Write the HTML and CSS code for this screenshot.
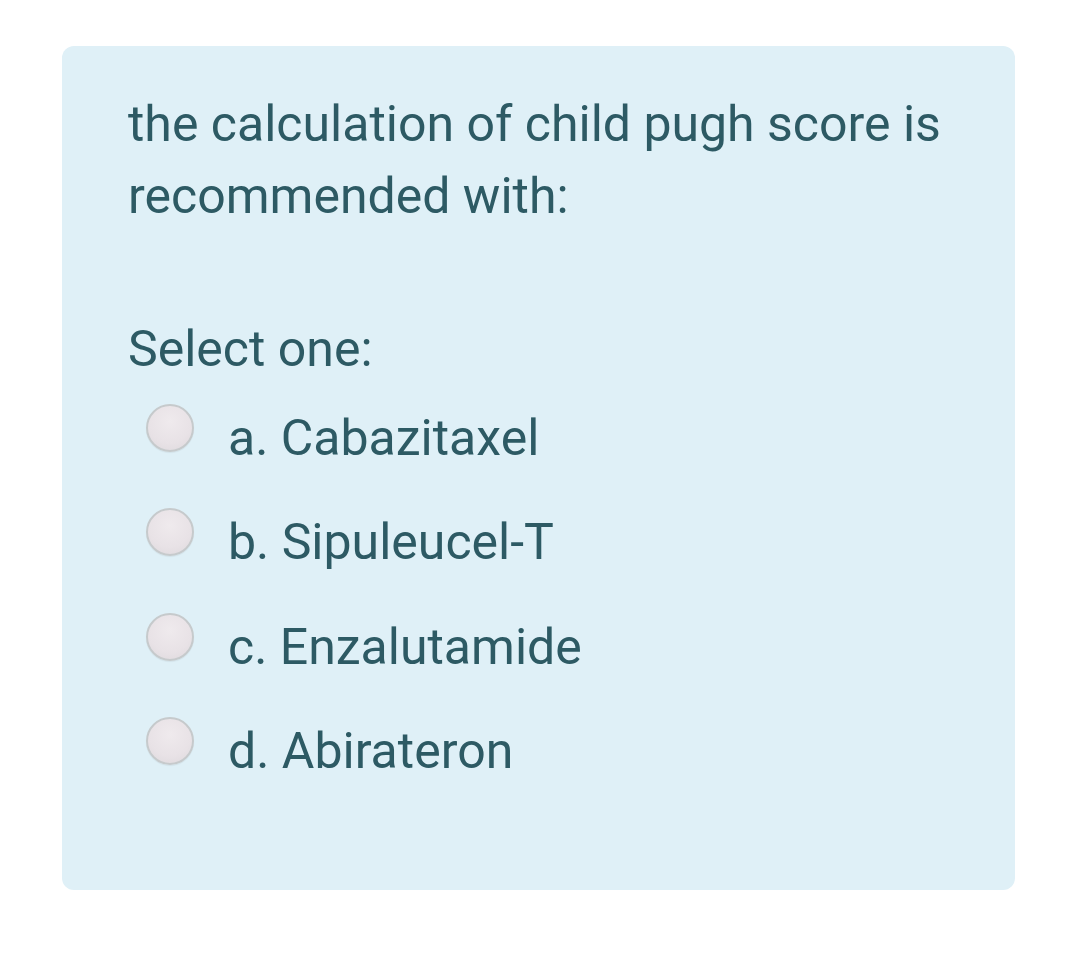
FILE: index.html
```html
<!DOCTYPE html>
<html>
<head>
<meta charset="utf-8">
<link rel="stylesheet" href="styles.css">
</head>
<body>
<div class="card">
  <p class="question">the calculation of child pugh score is recommended with:</p>
  <p class="prompt">Select one:</p>
  <div class="options">
    <label class="option"><span class="radio"></span><span class="label">a. Cabazitaxel</span></label>
    <label class="option"><span class="radio"></span><span class="label">b. Sipuleucel-T</span></label>
    <label class="option"><span class="radio"></span><span class="label">c. Enzalutamide</span></label>
    <label class="option"><span class="radio"></span><span class="label">d. Abirateron</span></label>
  </div>
</div>
</body>
</html>
```

FILE: styles.css
```css
html, body {
  margin: 0;
  padding: 0;
  background: #ffffff;
}
body {
  font-family: Roboto, "Liberation Sans", sans-serif;
  color: #2d5a64;
  padding: 46px 65px 0 62px;
}
.card {
  background: #dff0f7;
  border-radius: 12px;
  padding: 42px 60px 0 66px;
  box-sizing: border-box;
  height: 844px;
}
.question {
  margin: 0;
  font-size: 50px;
  line-height: 72px;
}
.prompt {
  margin: 81px 0 0 0;
  font-size: 50px;
  line-height: 72px;
}
.options {
  display: flex;
  flex-direction: column;
  margin-top: 1px;
}
.option {
  display: flex;
  align-items: flex-start;
  height: 104.3px;
  padding-left: 18px;
}
.radio {
  width: 48px;
  height: 48px;
  margin-top: 18px;
  border-radius: 50%;
  box-sizing: border-box;
  border: 2px solid #c6cacc;
  background: radial-gradient(circle at 50% 35%, #efeaed 0%, #e8e2e6 60%, #ddd8dc 100%);
  box-shadow: 0 1px 1px rgba(0, 0, 0, 0.06);
  margin-right: 34px;
  flex: none;
}
.label {
  font-size: 50px;
  line-height: 104px;
}
```
